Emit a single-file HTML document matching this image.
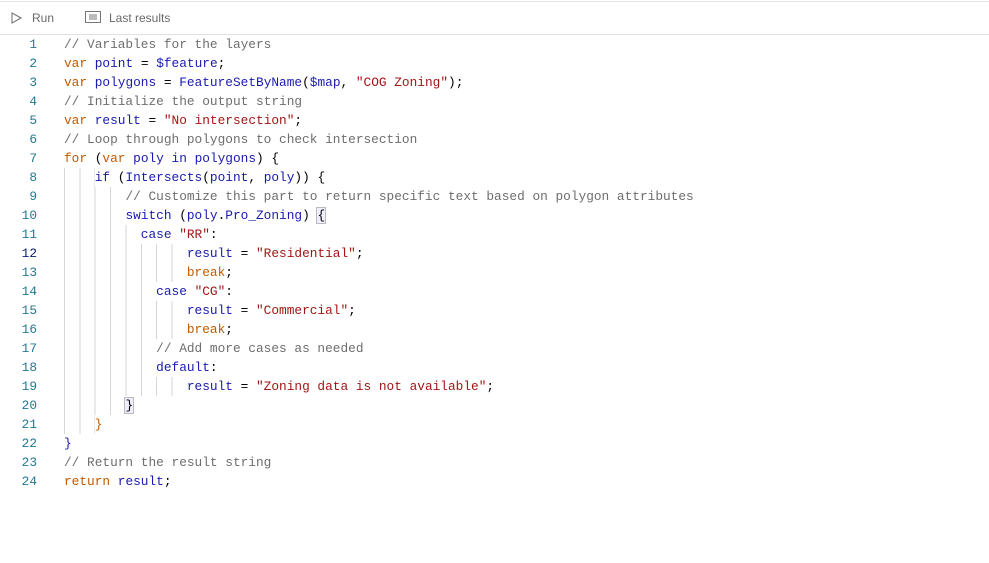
<html><head><style>
body{margin:0;background:#fff;width:989px;height:563px;overflow:hidden;font-family:"Liberation Sans",sans-serif}
.tb{position:absolute;top:1px;left:0;width:989px;height:32px;border-top:1px solid #e4e4e4;border-bottom:1px solid #e0e0e0}
.tb span{position:absolute;top:9px;font-size:12px;color:#6a6a6a}
.code{position:absolute;top:35px;left:0;font-family:"Liberation Mono",monospace;font-size:12.8px}
.l{height:19px;line-height:19px;white-space:pre;position:relative}
.n{position:absolute;left:0;width:37px;text-align:right;color:#237893}
.t{position:absolute;left:64px}
.g{display:inline-block;height:19px;vertical-align:top;background:repeating-linear-gradient(to right,#d6d6d6 0 1px,transparent 1px 15.36px)}
.c{color:#6e6e6e}.k{color:#c05a00}.b{color:#1a1ab0}.s{color:#a31515}.p{color:#333}
</style></head><body>
<div class="tb">
<svg style="position:absolute;left:11px;top:10px" width="11" height="12"><path d="M1 1 L10 6 L1 11 Z" fill="none" stroke="#777" stroke-width="1.1"/></svg>
<span style="left:32px">Run</span>
<svg style="position:absolute;left:85px;top:9px" width="17" height="13"><rect x="0.5" y="0.5" width="15" height="11" fill="none" stroke="#777"/><path d="M4 4h8M4 6h8M4 8h8" stroke="#777"/></svg>
<span style="left:109px">Last results</span>
</div>
<div class="code">
<div class="l"><span class="n">1</span><span class="t"><span class="c">// Variables for the layers</span></span></div>
<div class="l"><span class="n">2</span><span class="t"><span class="k">var</span> <span class="b">point</span> = <span class="b">$feature</span>;</span></div>
<div class="l"><span class="n">3</span><span class="t"><span class="k">var</span> <span class="b">polygons</span> = <span class="b">FeatureSetByName</span>(<span class="b">$map</span>, <span class="s">"COG Zoning"</span>);</span></div>
<div class="l"><span class="n">4</span><span class="t"><span class="c">// Initialize the output string</span></span></div>
<div class="l"><span class="n">5</span><span class="t"><span class="k">var</span> <span class="b">result</span> = <span class="s">"No intersection"</span>;</span></div>
<div class="l"><span class="n">6</span><span class="t"><span class="c">// Loop through polygons to check intersection</span></span></div>
<div class="l"><span class="n">7</span><span class="t"><span class="k">for</span> (<span class="k">var</span> <span class="b">poly</span> <span class="b">in</span> <span class="b">polygons</span>) {</span></div>
<div class="l"><span class="n">8</span><span class="t"><span class="g" style="width:30.72px"></span><span class="b">if</span> (<span class="b">Intersects</span>(<span class="b">point</span>, <span class="b">poly</span>)) {</span></div>
<div class="l"><span class="n">9</span><span class="t"><span class="g" style="width:61.44px"></span><span class="c">// Customize this part to return specific text based on polygon attributes</span></span></div>
<div class="l"><span class="n">10</span><span class="t"><span class="g" style="width:61.44px"></span><span class="b">switch</span> (<span class="b">poly</span>.<span class="b">Pro_Zoning</span>) <span style="outline:1px solid #bbb;background:#eef">{</span></span></div>
<div class="l"><span class="n">11</span><span class="t"><span class="g" style="width:76.8px"></span><span class="b">case</span> <span class="s">"RR"</span>:</span></div>
<div class="l"><span class="n" style="color:#0b216f">12</span><span class="t"><span class="g" style="width:122.88px"></span><span class="b">result</span> = <span class="s">"Residential"</span>;</span></div>
<div class="l"><span class="n">13</span><span class="t"><span class="g" style="width:122.88px"></span><span class="k">break</span>;</span></div>
<div class="l"><span class="n">14</span><span class="t"><span class="g" style="width:92.16px"></span><span class="b">case</span> <span class="s">"CG"</span>:</span></div>
<div class="l"><span class="n">15</span><span class="t"><span class="g" style="width:122.88px"></span><span class="b">result</span> = <span class="s">"Commercial"</span>;</span></div>
<div class="l"><span class="n">16</span><span class="t"><span class="g" style="width:122.88px"></span><span class="k">break</span>;</span></div>
<div class="l"><span class="n">17</span><span class="t"><span class="g" style="width:92.16px"></span><span class="c">// Add more cases as needed</span></span></div>
<div class="l"><span class="n">18</span><span class="t"><span class="g" style="width:92.16px"></span><span class="b">default</span>:</span></div>
<div class="l"><span class="n">19</span><span class="t"><span class="g" style="width:122.88px"></span><span class="b">result</span> = <span class="s">"Zoning data is not available"</span>;</span></div>
<div class="l"><span class="n">20</span><span class="t"><span class="g" style="width:61.44px"></span><span style="outline:1px solid #bbb;background:#eef">}</span></span></div>
<div class="l"><span class="n">21</span><span class="t"><span class="g" style="width:30.72px"></span><span class="k">}</span></span></div>
<div class="l"><span class="n">22</span><span class="t"><span class="b">}</span></span></div>
<div class="l"><span class="n">23</span><span class="t"><span class="c">// Return the result string</span></span></div>
<div class="l"><span class="n">24</span><span class="t"><span class="k">return</span> <span class="b">result</span>;</span></div>
</div>
</body></html>
